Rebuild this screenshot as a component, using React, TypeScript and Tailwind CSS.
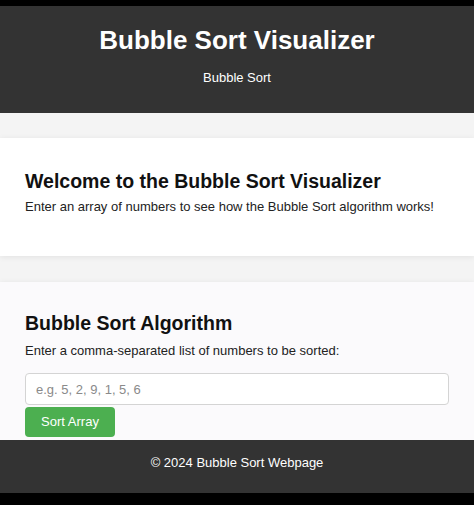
import React from "react";

export default function App() {
  return (
    <div className="w-[474px] h-[505px] bg-black flex flex-col overflow-hidden" style={{ fontFamily: '"Liberation Sans", Arial, sans-serif' }}>
      <div className="h-[6px] shrink-0" />
      <header className="h-[107px] shrink-0 bg-[#333333] text-white flex flex-col items-center">
        <h1 className="mt-[19px] text-[26px] leading-[30px] font-bold">Bubble Sort Visualizer</h1>
        <p className="mt-[14px] text-[13px] leading-[18px]">Bubble Sort</p>
      </header>
      <main className="flex-1 bg-[#f4f4f4] flex flex-col overflow-hidden pt-[25px]">
        <section className="h-[118px] shrink-0 bg-white shadow-[0_1px_6px_rgba(0,0,0,0.08)] px-[25px] pt-[31px]">
          <h2 className="text-[19.5px] leading-[24px] font-bold text-[#111]">Welcome to the Bubble Sort Visualizer</h2>
          <p className="mt-[6px] text-[13px] leading-[16px] text-[#222]">Enter an array of numbers to see how the Bubble Sort algorithm works!</p>
        </section>
        <section className="mt-[26px] flex-1 bg-[#fbfafc] shadow-[0_1px_6px_rgba(0,0,0,0.08)] px-[25px] pt-[29px]">
          <h2 className="text-[19.5px] leading-[24px] font-bold text-[#111]">Bubble Sort Algorithm</h2>
          <p className="mt-[8px] text-[13px] leading-[16px] text-[#222]">Enter a comma-separated list of numbers to be sorted:</p>
          <input
            className="mt-[14px] block w-full h-[32px] border border-[#d4d4d4] rounded-[4px] bg-white px-[10px] text-[13px] placeholder:text-[#8a8a8a] outline-none"
            placeholder="e.g. 5, 2, 9, 1, 5, 6"
          />
          <button className="mt-[2px] block w-[90px] h-[30px] bg-[#4caf50] rounded-[4px] text-white text-[13px]">Sort Array</button>
        </section>
      </main>
      <footer className="h-[53px] shrink-0 bg-[#333333] text-white flex items-center justify-center">
        <p className="text-[13px] leading-[18px] mb-[7px]">© 2024 Bubble Sort Webpage</p>
      </footer>
      <div className="h-[12px] shrink-0" />
    </div>
  );
}
